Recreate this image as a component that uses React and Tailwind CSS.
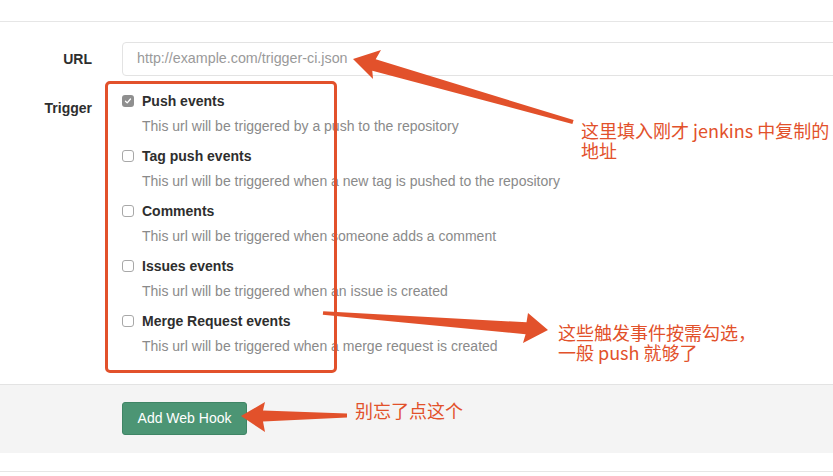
import React from "react";

const items = [
  { label: "Push events", desc: "This url will be triggered by a push to the repository", checked: true },
  { label: "Tag push events", desc: "This url will be triggered when a new tag is pushed to the repository" },
  { label: "Comments", desc: "This url will be triggered when someone adds a comment" },
  { label: "Issues events", desc: "This url will be triggered when an issue is created" },
  { label: "Merge Request events", desc: "This url will be triggered when a merge request is created" },
];

function Box({ checked }) {
  if (checked) {
    return (
      <span className="flex h-[12px] w-[12px] items-center justify-center rounded-[3px] bg-[#8f8f8f]">
        <svg width="8" height="8" viewBox="0 0 8 8">
          <path d="M1.5 4.2 L3.2 5.9 L6.5 2" fill="none" stroke="#fff" strokeWidth="1.3" strokeLinecap="round" strokeLinejoin="round" />
        </svg>
      </span>
    );
  }
  return <span className="block h-[12px] w-[12px] rounded-[3px] border border-[#a8a8a8] bg-white" />;
}

export default function App() {
  return (
    <div className="relative h-[476px] w-[833px] overflow-hidden bg-white font-['Liberation_Sans',Arial,sans-serif] text-[14px] text-[#2e2e2e]">
      <div className="h-[22px] border-b border-[#e6e6e6]" />
      <div className="pt-[20px]">
        <div className="flex items-center">
          <div className="w-[92px] shrink-0 text-right font-bold">URL</div>
          <div className="ml-[30px] flex h-[34px] w-[760px] shrink-0 items-center rounded-[4px] border border-[#e3e3e3] px-[14px] text-[14.3px] text-[#9a9a9a]">
            http://example.com/trigger-ci.json
          </div>
        </div>
        <div className="mt-[15px] flex">
          <div className="w-[92px] shrink-0 pt-[7px] text-right font-bold leading-[20px]">Trigger</div>
          <div className="ml-[30px] flex flex-col gap-[10px]">
            {items.map((it) => (
              <div key={it.label} className="flex flex-col">
                <div className="flex h-[20px] items-center">
                  <Box checked={it.checked} />
                  <span className="ml-[8px] font-bold">{it.label}</span>
                </div>
                <div className="mt-[5px] pl-[20px] leading-[20px] text-[#8a8a8a]">{it.desc}</div>
              </div>
            ))}
          </div>
        </div>
      </div>
      <div className="mt-[28px] border-t border-[#e3e3e3] bg-[#f4f4f4] pb-[18px] pl-[122px] pt-[17px]">
        <button className="flex h-[33px] w-[125px] items-center justify-center rounded-[3px] border border-[#3f8565] bg-[#4c9574] text-[14px] text-white">
          Add Web Hook
        </button>
      </div>
      <div className="h-[19px] border-b border-[#e6e6e6]" />

      {/* annotations */}
      <div className="pointer-events-none absolute left-[105px] top-[81px] h-[292px] w-[232px] rounded-[5px] border-[3px] border-[#e2512b]" />
      <svg className="pointer-events-none absolute left-0 top-0" width="833" height="476">
        <polygon fill="#e2512b" points="353,59 381,50 375.7,59.2 573.6,120.1 572.4,123.9 372.3,70.8 373,79" />
        <polygon fill="#e2512b" points="548,330 528,313 526.5,322.3 323.2,311.3 322.8,314.7 525.6,334.3 523,343" />
        <polygon fill="#e2512b" points="241,416 265,402 263,410.5 347,413.5 347,417.5 263,421.5 265,432" />
      </svg>
      <div className="absolute left-[581px] top-[120px] font-['Noto_Sans_CJK_SC',sans-serif] text-[18px] leading-[20px] text-[#e2512b]">
        这里填入刚才 jenkins 中复制的
        <br />
        地址
      </div>
      <div className="absolute left-[558px] top-[322px] font-['Noto_Sans_CJK_SC',sans-serif] text-[18px] leading-[20px] text-[#e2512b]">
        这些触发事件按需勾选，
        <br />
        一般 push 就够了
      </div>
      <div className="absolute left-[355px] top-[401px] font-['Noto_Sans_CJK_SC',sans-serif] text-[18px] leading-[19px] text-[#e2512b]">
        别忘了点这个
      </div>
    </div>
  );
}
